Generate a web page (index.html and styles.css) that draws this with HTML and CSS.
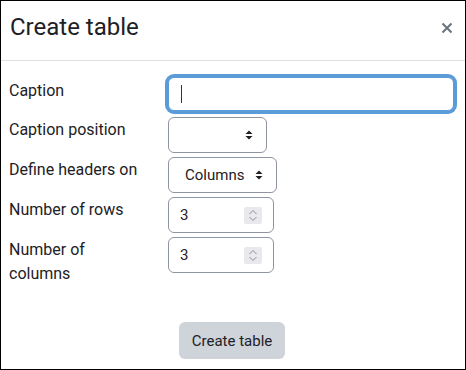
FILE: index.html
```html
<!DOCTYPE html>
<html lang="en">
<head>
<meta charset="utf-8">
<title>Create table</title>
<link rel="stylesheet" href="styles.css">
</head>
<body>
<div class="dialog">
  <div class="header">
    <h5 class="title">Create table</h5>
    <button class="close" type="button" aria-label="Close">
      <svg width="12" height="12" viewBox="0 0 12 12"><path d="M1.5 1.5 L10.5 10.5 M10.5 1.5 L1.5 10.5" stroke="#6a737b" stroke-width="2" stroke-linecap="butt"/></svg>
    </button>
  </div>
  <div class="body">
    <div class="row first">
      <label class="label">Caption</label>
      <div class="field caption focused"><span class="caret"></span></div>
    </div>
    <div class="row">
      <label class="label">Caption position</label>
      <div class="select w99">
        <span class="select-text"></span>
        <svg class="arrows" width="8" height="10" viewBox="0 0 8 10"><path d="M0.5 4 L4 0.5 L7.5 4 Z M0.5 6 L4 9.5 L7.5 6 Z" fill="#1d2125"/></svg>
      </div>
    </div>
    <div class="row">
      <label class="label">Define headers on</label>
      <div class="select w109">
        <span class="select-text cols">Columns</span>
        <svg class="arrows" width="8" height="10" viewBox="0 0 8 10"><path d="M0.5 4 L4 0.5 L7.5 4 Z M0.5 6 L4 9.5 L7.5 6 Z" fill="#1d2125"/></svg>
      </div>
    </div>
    <div class="row">
      <label class="label">Number of rows</label>
      <div class="field number">
        <input class="num-input" type="text" value="3">
        <span class="spinner"><svg width="18" height="17" viewBox="0 0 18 17"><path d="M5.5 7 L9 3.5 L12.5 7 M5.5 10 L9 13.5 L12.5 10" fill="none" stroke="#8e8e93" stroke-width="1"/></svg></span>
      </div>
    </div>
    <div class="row">
      <label class="label">Number of columns</label>
      <div class="field number">
        <input class="num-input" type="text" value="3">
        <span class="spinner"><svg width="18" height="17" viewBox="0 0 18 17"><path d="M5.5 7 L9 3.5 L12.5 7 M5.5 10 L9 13.5 L12.5 10" fill="none" stroke="#8e8e93" stroke-width="1"/></svg></span>
      </div>
    </div>
  </div>
  <div class="footer">
    <button class="btn" type="button">Create table</button>
  </div>
</div>
</body>
</html>
```

FILE: styles.css
```css
* { box-sizing: border-box; }
html, body { margin: 0; padding: 0; background: #fff; }
body { font-family: Roboto, "Liberation Sans", sans-serif; color: #1d2125; }

.dialog {
  width: 466px;
  height: 370px;
  border: 1px solid #000;
  display: flex;
  flex-direction: column;
  background: #fff;
}

.header {
  display: flex;
  align-items: flex-start;
  justify-content: space-between;
  padding: 12px 12px 19px 9px;
  border-bottom: 1px solid #dee2e6;
}
.title {
  margin: 0;
  font-size: 24px;
  font-weight: 400;
  line-height: 28px;
  color: #1d2125;
}
.close {
  border: none;
  background: none;
  padding: 0;
  margin-top: 9px;
  width: 12px;
  height: 12px;
  display: flex;
}

.body {
  padding: 15px 0 0 8px;
  display: flex;
  flex-direction: column;
  gap: 4px;
}
.row {
  display: grid;
  grid-template-columns: 132px auto;
  column-gap: 27px;
  align-items: start;
  min-height: 36px;
}
.row.first { min-height: 37px; padding-top: 1px; }
.label {
  font-size: 16px;
  line-height: 24px;
  padding-top: 1px;
  color: #1d2125;
}
.row.first .label { padding-top: 2px; }

.field {
  height: 36px;
  border: 1px solid #8f959e;
  border-radius: 6px;
  background: #fff;
  display: flex;
  align-items: center;
}
.caption {
  width: 286px;
  height: 34px;
  padding-left: 12px;
}
.focused {
  border-color: #5b9bd8;
  box-shadow: 0 0 0 3px #5b9bd8;
}
.caret {
  display: block;
  width: 1px;
  height: 18px;
  background: #333;
}

.select {
  height: 36px;
  border: 1px solid #8f959e;
  border-radius: 6px;
  display: flex;
  align-items: center;
  justify-content: space-between;
  padding: 0 13px 0 16px;
  font-size: 15px;
  color: #1d2125;
}
.w99 { width: 99px; }
.w109 { width: 109px; }
.select-text { line-height: 20px; }

.number {
  width: 106px;
  padding: 0 11px 0 11px;
  justify-content: space-between;
}
.num-input {
  border: none;
  outline: none;
  background: transparent;
  font-family: Roboto, "Liberation Sans", sans-serif;
  font-size: 15px;
  color: #1d2125;
  padding: 0;
  width: 40px;
}
.spinner {
  display: block;
  width: 18px;
  height: 17px;
  background: #e9e9ed;
  border-radius: 2px;
}
.spinner svg { display: block; }

.footer {
  margin-top: auto;
  display: flex;
  justify-content: center;
  padding: 0 0 10px 0;
}
.btn {
  font-family: Roboto, "Liberation Sans", sans-serif;
  font-size: 15px;
  color: #1d2125;
  background: #ced4da;
  border: none;
  border-radius: 6px;
  height: 37px;
  padding: 0 13px;
  margin-left: -2px;
}
```
